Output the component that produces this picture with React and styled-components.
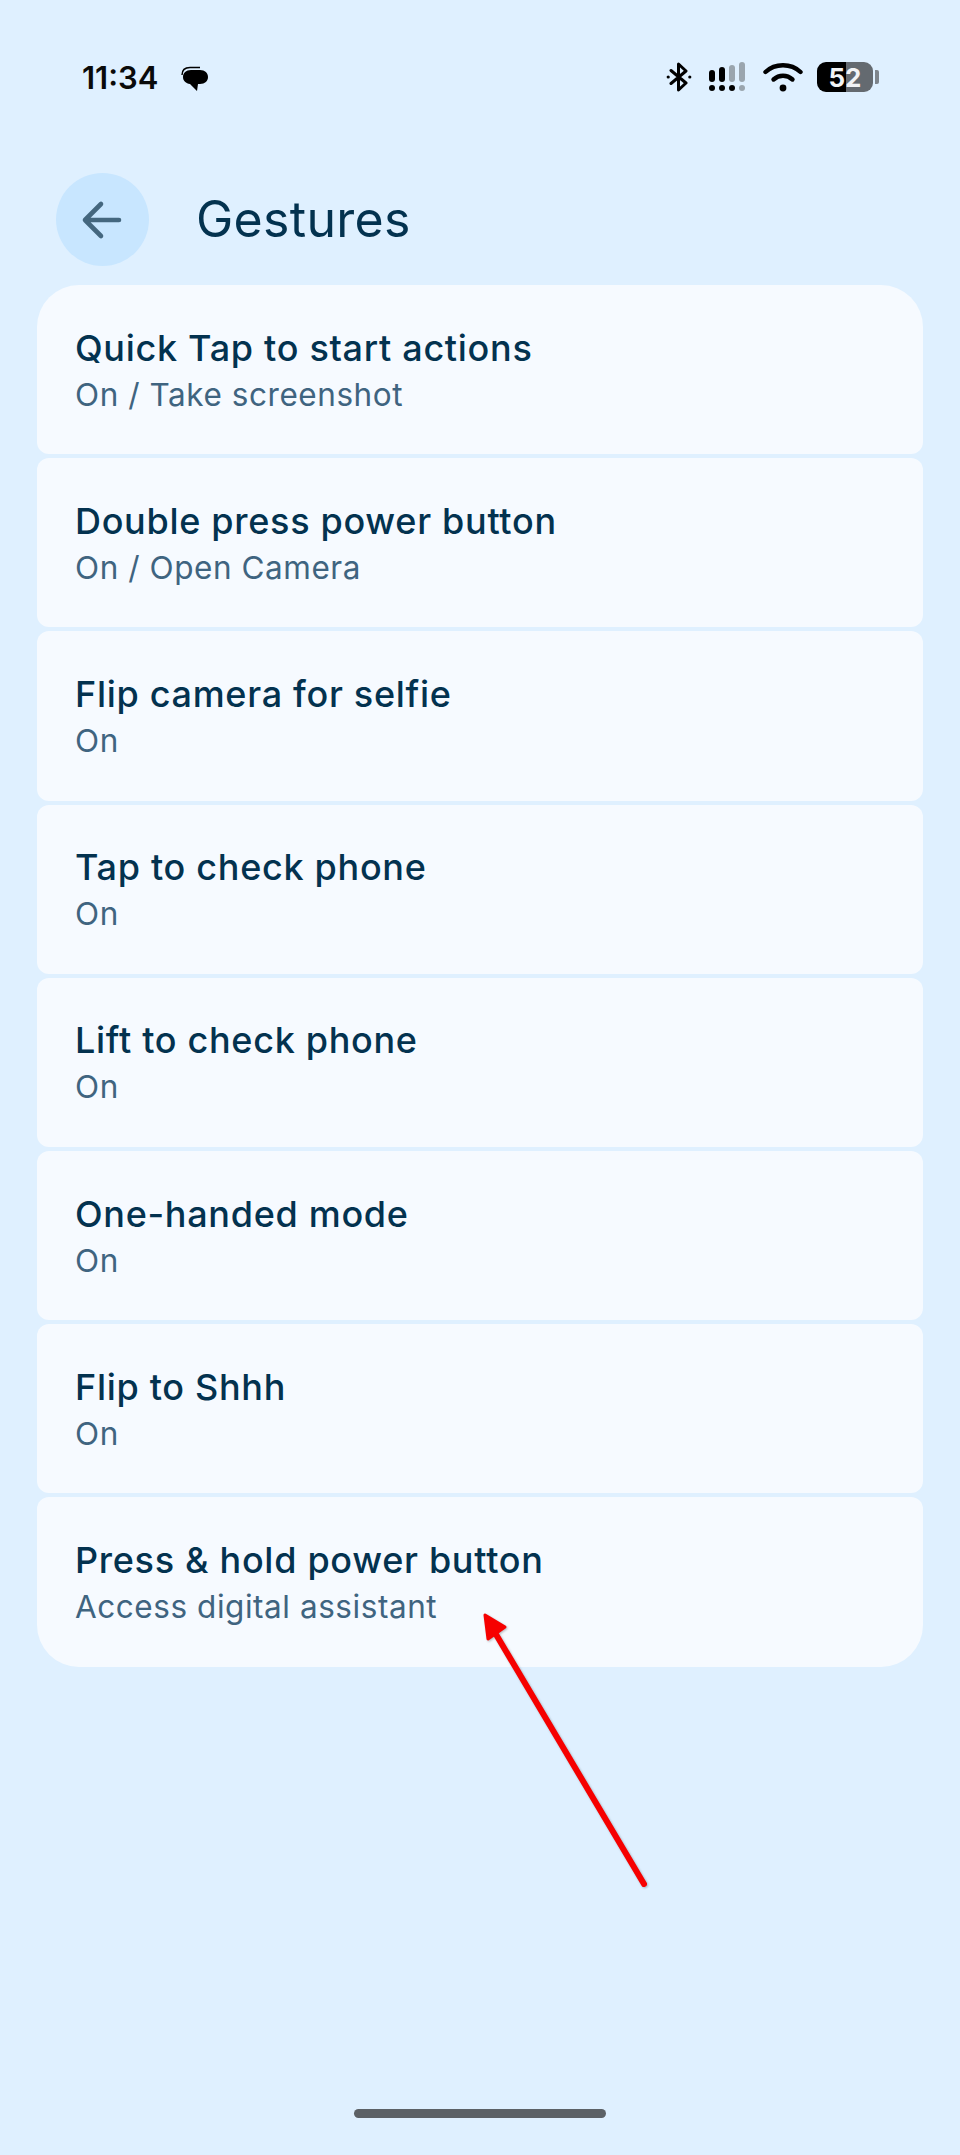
import React from "react";
import styled, { createGlobalStyle } from "styled-components";

const rows = [
  { title: "Quick Tap to start actions", sub: "On / Take screenshot" },
  { title: "Double press power button", sub: "On / Open Camera" },
  { title: "Flip camera for selfie", sub: "On" },
  { title: "Tap to check phone", sub: "On" },
  { title: "Lift to check phone", sub: "On" },
  { title: "One-handed mode", sub: "On" },
  { title: "Flip to Shhh", sub: "On" },
  { title: "Press & hold power button", sub: "Access digital assistant" },
];

const App = () => {
  return (
    <Page>
      <GlobalStyle />
      <StatusBar>
        <StatusLeft>
          <Time>11:34</Time>
          <MessageIcon />
        </StatusLeft>
        <StatusRight>
          <BluetoothIcon />
          <SignalIcon />
          <WifiIcon />
          <Battery>
            <BatteryBody>
              <BatteryLevel>52</BatteryLevel>
            </BatteryBody>
            <BatteryNub />
          </Battery>
        </StatusRight>
      </StatusBar>
      <Header>
        <BackButton>
          <svg width="44" height="44" viewBox="0 0 44 44" fill="none" stroke="#44677f" strokeWidth="4.6" strokeLinecap="round" strokeLinejoin="round">
            <path d="M38 22H4M20 6 4 22l16 16" />
          </svg>
        </BackButton>
        <Title>Gestures</Title>
      </Header>
      <List>
        {rows.map((row) => (
          <Row key={row.title}>
            <RowTitle>{row.title}</RowTitle>
            <RowSub>{row.sub}</RowSub>
          </Row>
        ))}
      </List>
      <HomeBar />
      <Annotation width="960" height="2155" viewBox="0 0 960 2155">
        <path d="M644 1884 494 1631" stroke="#f60000" strokeWidth="6" strokeLinecap="round" fill="none" />
        <path d="M485 1615 505 1627 488 1639Z" fill="#f60000" stroke="#f60000" strokeWidth="3" strokeLinejoin="round" />
      </Annotation>
    </Page>
  );
};

export default App;

const MessageIcon = () => (
  <MessageSvg width="30" height="28" viewBox="0 0 30 28">
    <path d="M2 10C2 5 5 2.5 10 2.5h10" fill="none" stroke="#000" strokeWidth="1.4" />
    <path d="M3 12c0-4 3-7 8-7h9c5 0 8 3 8 7s-3 7-8 7h-2l-1 7-7-7c-4-.5-7-3-7-7Z" fill="#000" />
  </MessageSvg>
);

const BluetoothIcon = () => (
  <svg width="26" height="30" viewBox="0 0 26 30" fill="none" stroke="#000" strokeWidth="3" strokeLinejoin="round" strokeLinecap="round">
    <path d="M5 8.5 20 21l-7.5 7V2L20 9 5 21.5" />
    <circle cx="2.2" cy="15" r="1.6" fill="#000" stroke="none" />
    <circle cx="23.8" cy="15" r="1.6" fill="#000" stroke="none" />
  </svg>
);

const SignalIcon = () => (
  <svg width="39" height="30" viewBox="0 0 39 30">
    <rect x="1" y="8" width="6" height="12" rx="3" fill="#000" />
    <rect x="11" y="5" width="6" height="15" rx="3" fill="#000" />
    <rect x="21" y="3" width="6" height="17" rx="3" fill="#9aa5ae" />
    <rect x="31" y="0" width="6" height="20" rx="3" fill="#9aa5ae" />
    <circle cx="4" cy="26" r="3" fill="#000" />
    <circle cx="14" cy="26" r="3" fill="#000" />
    <circle cx="24" cy="26" r="3" fill="#000" />
    <circle cx="34" cy="26" r="3" fill="#9aa5ae" />
  </svg>
);

const WifiIcon = () => (
  <svg width="40" height="30" viewBox="0 0 40 30" fill="none" stroke="#000" strokeWidth="4.4" strokeLinecap="round">
    <path d="M2.5 10C12 1 28 1 37.5 10" />
    <path d="M10.5 17.5C16 12.5 24 12.5 29.5 17.5" />
    <circle cx="20" cy="26" r="3.4" fill="#000" stroke="none" />
  </svg>
);

const GlobalStyle = createGlobalStyle`
  html, body {
    margin: 0;
    padding: 0;
    background: #dff0ff;
  }
`;

const Page = styled.div`
  position: relative;
  width: 960px;
  height: 2155px;
  overflow: hidden;
  display: flex;
  flex-direction: column;
  background: #dff0ff;
  font-family: "Inter", "Noto Sans", sans-serif;
`;

const StatusBar = styled.div`
  height: 173px;
  padding: 61px 81px 0 82px;
  box-sizing: border-box;
  display: flex;
  justify-content: space-between;
  align-items: flex-start;
`;

const StatusLeft = styled.div`
  display: flex;
  align-items: center;
  gap: 22px;
  height: 32px;
`;

const MessageSvg = styled.svg`
  margin-top: 4px;
`;

const Time = styled.span`
  font-size: 31px;
  font-weight: 600;
  color: #0a0a0a;
`;

const StatusRight = styled.div`
  display: flex;
  align-items: center;
  gap: 16px;
  height: 32px;
`;

const Battery = styled.div`
  display: flex;
  align-items: center;
  gap: 2px;
  margin-left: -2px;
`;

const BatteryBody = styled.div`
  width: 56px;
  height: 30px;
  border-radius: 9px;
  display: flex;
  align-items: center;
  justify-content: center;
  background: linear-gradient(to right, #000 52%, #646a70 52%);
`;

const BatteryLevel = styled.span`
  font-size: 26px;
  font-weight: 700;
  color: #f2f4f6;
`;

const BatteryNub = styled.div`
  width: 4px;
  height: 14px;
  border-radius: 0 2px 2px 0;
  background: #7d848b;
`;

const Header = styled.div`
  display: flex;
  align-items: center;
  gap: 48px;
  padding-left: 56px;
`;

const BackButton = styled.div`
  width: 93px;
  height: 93px;
  border-radius: 50%;
  background: #c8e6ff;
  display: flex;
  align-items: center;
  justify-content: center;
`;

const Title = styled.h1`
  margin: 0 0 1px -1px;
  font-size: 50px;
  letter-spacing: 0.3px;
  font-weight: 400;
  color: #03324f;
`;

const List = styled.div`
  margin: 19px 37px 0;
  display: flex;
  flex-direction: column;
  gap: 4px;
`;

const Row = styled.div`
  height: 169.2px;
  box-sizing: border-box;
  padding: 3px 38px 0;
  background: #f6faff;
  border-radius: 12px;
  display: flex;
  flex-direction: column;
  justify-content: center;

  &:first-child {
    border-top-left-radius: 42px;
    border-top-right-radius: 42px;
  }

  &:last-child {
    border-bottom-left-radius: 42px;
    border-bottom-right-radius: 42px;
  }
`;

const RowTitle = styled.div`
  font-size: 36px;
  line-height: 46px;
  letter-spacing: 0.7px;
  font-weight: 500;
  color: #03324f;
`;

const RowSub = styled.div`
  margin-top: 1px;
  font-size: 31.5px;
  line-height: 46px;
  letter-spacing: 0.55px;
  color: #3f6480;
`;

const HomeBar = styled.div`
  position: absolute;
  left: 354px;
  bottom: 37px;
  width: 252px;
  height: 9px;
  border-radius: 5px;
  background: #5c6166;
`;

const Annotation = styled.svg`
  position: absolute;
  left: 0;
  top: 0;
  pointer-events: none;
  filter: drop-shadow(1px 1px 1px rgba(60, 60, 60, 0.35));
`;
